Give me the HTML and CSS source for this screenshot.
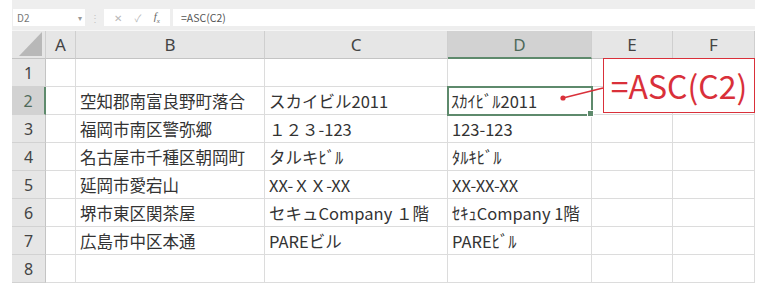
FILE: index.html
```html
<!DOCTYPE html>
<html>
<head>
<meta charset="utf-8">
<link rel="stylesheet" href="styles.css">
</head>
<body>
<div class="sheet">
  <div class="toolbar">
    <div class="namebox"><span>D2</span><span class="arrow">▾</span></div>
    <div class="dots">⋮</div>
    <div class="btns"><span>✕</span><span>✓</span><span class="fx">f<sub>x</sub></span></div>
    <div class="formula">=ASC(C2)</div>
  </div>
  <div class="grid">
    <div class="h corner"><div class="tri"></div></div>
    <div class="h">A</div><div class="h">B</div><div class="h">C</div><div class="h sel">D</div><div class="h">E</div><div class="h">F</div>

    <div class="r">1</div><div class="c"></div><div class="c"></div><div class="c"></div><div class="c"></div><div class="c"></div><div class="c"></div>

    <div class="r rsel">2</div><div class="c"></div><div class="c">空知郡南富良野町落合</div><div class="c">スカイビル2011</div><div class="c active">ｽｶｲﾋﾞﾙ2011<span class="handle"></span></div><div class="c"></div><div class="c"></div>

    <div class="r">3</div><div class="c"></div><div class="c">福岡市南区警弥郷</div><div class="c">１２３-123</div><div class="c">123-123</div><div class="c"></div><div class="c"></div>

    <div class="r">4</div><div class="c"></div><div class="c">名古屋市千種区朝岡町</div><div class="c">タルキﾋﾞﾙ</div><div class="c">ﾀﾙｷﾋﾞﾙ</div><div class="c"></div><div class="c"></div>

    <div class="r">5</div><div class="c"></div><div class="c">延岡市愛宕山</div><div class="c">XX-ＸＸ-XX</div><div class="c">XX-XX-XX</div><div class="c"></div><div class="c"></div>

    <div class="r">6</div><div class="c"></div><div class="c">堺市東区関茶屋</div><div class="c">セキュCompany １階</div><div class="c">ｾｷｭCompany 1階</div><div class="c"></div><div class="c"></div>

    <div class="r">7</div><div class="c"></div><div class="c">広島市中区本通</div><div class="c">PAREビル</div><div class="c">PAREﾋﾞﾙ</div><div class="c"></div><div class="c"></div>

    <div class="r">8</div><div class="c"></div><div class="c"></div><div class="c"></div><div class="c"></div><div class="c"></div><div class="c"></div>
  </div>
  <svg class="connector" width="768" height="288" viewBox="0 0 768 288">
    <line x1="563" y1="98" x2="603" y2="88" stroke="#d9303a" stroke-width="1.6"/>
    <circle cx="563" cy="98" r="2.6" fill="#d9303a"/>
  </svg>
  <div class="callout">=ASC(C2)</div>
</div>
</body>
</html>
```
FILE: styles.css
```css
html, body {
  margin: 0;
  padding: 0;
  background: #ffffff;
}
body {
  font-family: "Noto Sans CJK JP", "Noto Sans", sans-serif;
  width: 768px;
  height: 288px;
  overflow: hidden;
}
.sheet {
  margin-left: 12px;
  width: 743px;
}
.toolbar {
  height: 31px;
  background: #eeeeee;
  display: flex;
  align-items: flex-start;
  padding-top: 9px;
  box-sizing: border-box;
  border-bottom: 1px solid #f6f6f6;
}
.namebox {
  margin-left: 1px;
  width: 72px;
  height: 17px;
  background: #fff;
  display: flex;
  justify-content: space-between;
  align-items: center;
  padding: 0 3px 0 4px;
  box-sizing: border-box;
  font-size: 10px;
  color: #777;
}
.namebox .arrow {
  font-size: 8px;
  color: #999;
}
.dots {
  width: 19px;
  text-align: center;
  font-size: 10px;
  line-height: 17px;
  color: #c4c4c4;
}
.btns {
  width: 66px;
  height: 17px;
  background: #fff;
  display: flex;
  align-items: center;
  justify-content: space-around;
  font-size: 10px;
  color: #b8b8b8;
  padding: 0 4px;
  box-sizing: border-box;
}
.btns .fx {
  font-family: "Liberation Serif", serif;
  font-style: italic;
  color: #666;
  font-size: 11px;
}
.btns .fx sub {
  font-size: 7px;
}
.formula {
  margin-left: 3px;
  flex: 1;
  height: 17px;
  background: #fff;
  font-size: 10.5px;
  line-height: 17px;
  color: #555;
  padding-left: 8px;
}
.grid {
  display: grid;
  grid-template-columns: 34px 30px 189px 183px 144px 81px 82px;
  grid-template-rows: repeat(9, 28px);
}
.h {
  background: #e6e6e6;
  border-right: 1px solid #cfcfcf;
  border-bottom: 1px solid #c4c4c4;
  box-sizing: border-box;
  display: flex;
  align-items: center;
  justify-content: center;
  font-family: "Noto Sans", "Open Sans", sans-serif;
  font-size: 17px;
  color: #444;
}
.h.sel {
  background: #d2d2d2;
  border-bottom: 2px solid #5e8a6c;
  color: #4f6a5a;
}
.corner {
  position: relative;
}
.tri {
  position: absolute;
  right: 3px;
  bottom: 2px;
  width: 0;
  height: 0;
  border-left: 23px solid transparent;
  border-bottom: 24px solid #b8b8b8;
}
.r {
  background: #e6e6e6;
  border-right: 1px solid #c4c4c4;
  border-bottom: 1px solid #d2d2d2;
  box-sizing: border-box;
  display: flex;
  align-items: center;
  justify-content: center;
  font-family: "Noto Sans", "Open Sans", sans-serif;
  font-size: 16px;
  color: #444;
}
.r.rsel {
  background: #d2d2d2;
  border-right: 2px solid #5e8a6c;
  color: #4f6a5a;
}
.c {
  border-right: 1px solid #dcdcdc;
  border-bottom: 1px solid #dcdcdc;
  box-sizing: border-box;
  display: flex;
  align-items: center;
  padding-left: 4px;
  font-size: 16.5px;
  color: #333;
  white-space: nowrap;
  overflow: visible;
}
.c.active {
  position: relative;
  outline: 2px solid #5e8a6c;
  outline-offset: -1px;
  padding-left: 3px;
}
.handle {
  position: absolute;
  right: -3px;
  bottom: -3px;
  width: 5px;
  height: 5px;
  background: #5e8a6c;
  border: 1px solid #fff;
}
.connector {
  position: absolute;
  left: 0;
  top: 0;
  pointer-events: none;
}
.callout {
  position: absolute;
  left: 603px;
  top: 58px;
  width: 152px;
  height: 55px;
  box-sizing: border-box;
  border: 1.5px solid #d9303a;
  background: #fff;
  color: #d9303a;
  font-family: "Noto Sans CJK JP", "Noto Sans", sans-serif;
  font-size: 32px;
  line-height: 52px;
  text-align: center;
  white-space: nowrap;
}
```
